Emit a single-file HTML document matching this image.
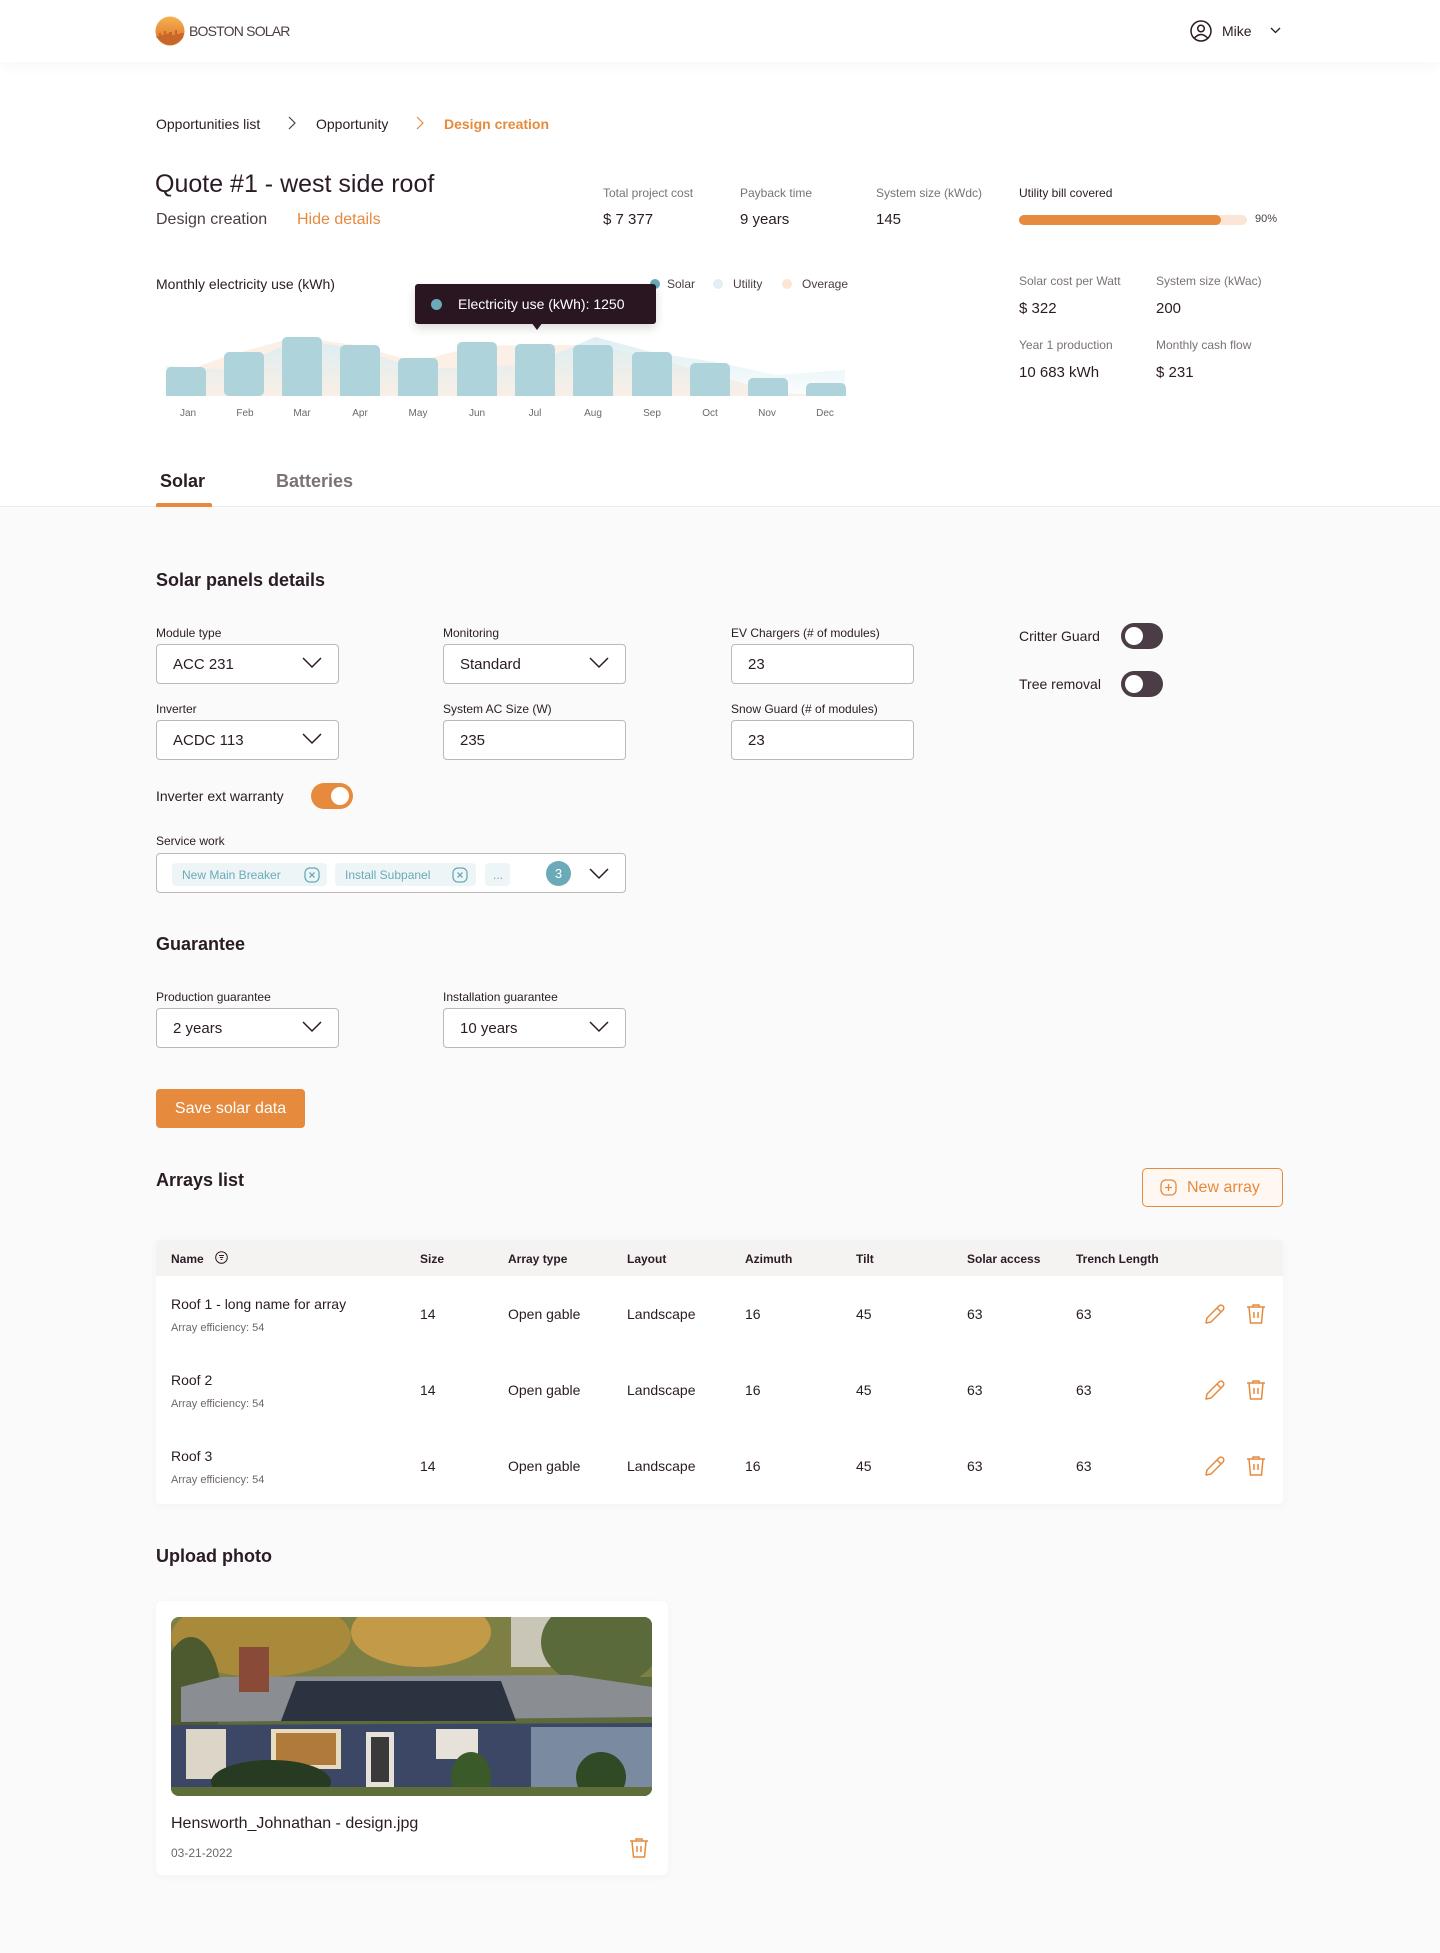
<!DOCTYPE html>
<html><head><meta charset="utf-8"><style>
*{box-sizing:border-box;margin:0;padding:0}
body{width:1440px;height:1953px;background:#fafafa;font-family:"Liberation Sans",sans-serif;color:#2a1b24;position:relative;overflow:hidden}
.a{position:absolute;white-space:nowrap}
.top{position:absolute;left:0;top:0;width:1440px;height:507px;background:#fff;border-bottom:1px solid #ececec}
.hdr{position:absolute;left:0;top:0;width:1440px;height:62px;background:#fff;box-shadow:0 4px 14px rgba(0,0,0,.04)}
.lbl{font-size:12px;color:#7a7275}
.val{font-size:15px;color:#2a1b24}
.flbl{font-size:12px;color:#2a1b24}
.inp{position:absolute;width:183px;height:40px;border:1px solid #bdb8ba;border-radius:4px;background:#fff;font-size:15px;padding:11px 16px;color:#2a1b24}
.inp svg{position:absolute;right:16px;top:12px}
.h2{font-size:18px;font-weight:bold;color:#2a1b24}
.tog{position:absolute;width:42px;height:26px;border-radius:13px;background:#4a3d45}
.tog::after{content:"";position:absolute;left:4px;top:4px;width:18px;height:18px;border-radius:50%;background:#fff}
.tog.on{background:#e68a3e}.tog.on::after{left:20px}
.th{font-size:12px;font-weight:bold;color:#2a1b24}
.td{font-size:14px;color:#2a1b24}
.sub{font-size:11px;color:#6f676b}
.chip{position:absolute;top:9px;height:23px;background:#eef5f7;border-radius:4px;font-size:12px;color:#6aaab9;padding:5px 10px}
</style></head><body>
<div class="top"></div>
<div class="hdr"></div>
<svg class="a" style="left:155px;top:16px" width="30" height="30" viewBox="0 0 30 30"><defs><linearGradient id="lg" x1="0" y1="0" x2="0" y2="1"><stop offset="0" stop-color="#f6b14f"/><stop offset="1" stop-color="#d8702a"/></linearGradient></defs><circle cx="15" cy="15" r="14.5" fill="url(#lg)"/><path d="M1 20 L4 20 4 17 6 17 6 19 9 19 9 15 11 15 11 18 14 18 14 16 17 16 17 19 20 19 20 14 22 14 22 18 25 18 25 17 29 17 L28 22 Q15 36 2 22Z" fill="#c9662a"/></svg>
<div class="a" style="left:189px;top:23px;font-size:14px;color:#4a3d45;letter-spacing:-.8px">BOSTON SOLAR</div>
<svg class="a" style="left:1190px;top:20px" width="22" height="22" viewBox="0 0 22 22" fill="none" stroke="#2a1b24" stroke-width="1.5"><circle cx="11" cy="11" r="10"/><circle cx="11" cy="8.5" r="3.3"/><path d="M4.5 18 Q11 11 17.5 18"/></svg>
<div class="a" style="left:1222px;top:23px;font-size:14px">Mike</div>
<svg class="a" style="left:1270px;top:27px" width="11" height="7" viewBox="0 0 11 7" fill="none" stroke="#2a1b24" stroke-width="1.3"><path d="M1 1l4.5 4.5L10 1"/></svg>

<div class="a" style="left:156px;top:116px;font-size:14px;color:#2a1b24">Opportunities list</div>
<svg class="a" style="left:288px;top:116px" width="8" height="14" viewBox="0 0 8 14" fill="none" stroke="#4a3d45" stroke-width="1.2"><path d="M1 1l6 6-6 6"/></svg>
<div class="a" style="left:316px;top:116px;font-size:14px">Opportunity</div>
<svg class="a" style="left:416px;top:116px" width="8" height="14" viewBox="0 0 8 14" fill="none" stroke="#e68a3e" stroke-width="1.2"><path d="M1 1l6 6-6 6"/></svg>
<div class="a" style="left:444px;top:116px;font-size:14px;color:#e68a3e;font-weight:bold">Design creation</div>

<div class="a" style="left:155px;top:170px;font-size:25px">Quote #1 - west side roof</div>
<div class="a" style="left:156px;top:211px;font-size:16px;color:#4a3d45">Design creation</div>
<div class="a" style="left:297px;top:211px;font-size:16px;color:#e68a3e">Hide details</div>

<div class="a lbl" style="left:603px;top:186px">Total project cost</div><div class="a val" style="left:603px;top:211px">$ 7 377</div>
<div class="a lbl" style="left:740px;top:186px">Payback time</div><div class="a val" style="left:740px;top:211px">9 years</div>
<div class="a lbl" style="left:876px;top:186px">System size (kWdc)</div><div class="a val" style="left:876px;top:211px">145</div>
<div class="a lbl" style="left:1019px;top:186px;color:#2a1b24">Utility bill covered</div>
<div class="a" style="left:1019px;top:215px;width:228px;height:10px;border-radius:5px;background:#fbe6d5"></div>
<div class="a" style="left:1019px;top:215px;width:202px;height:10px;border-radius:5px;background:#e68a3e"></div>
<div class="a" style="left:1255px;top:213px;font-size:11px;color:#4a3d45">90%</div>

<div class="a" style="left:156px;top:276px;font-size:14px">Monthly electricity use (kWh)</div>
<div class="a" style="left:650px;top:279px;width:10px;height:10px;border-radius:50%;background:#6aaab9"></div><div class="a" style="left:667px;top:277px;font-size:12px;color:#4a3d45">Solar</div>
<div class="a" style="left:713px;top:279px;width:10px;height:10px;border-radius:50%;background:#e3eff2"></div><div class="a" style="left:733px;top:277px;font-size:12px;color:#4a3d45">Utility</div>
<div class="a" style="left:782px;top:279px;width:10px;height:10px;border-radius:50%;background:#fbe6d5"></div><div class="a" style="left:802px;top:277px;font-size:12px;color:#4a3d45">Overage</div>

<svg class="a" style="left:160px;top:320px" width="690" height="110" viewBox="160 320 690 110">
<defs><linearGradient id="fg" x1="0" y1="0" x2="0" y2="1"><stop offset="0" stop-color="#dceef2"/><stop offset="1" stop-color="#dceef2" stop-opacity=".1"/></linearGradient></defs>
<path d="M166 378 L230 355 L296 337 L355 345 L416 362 L475 346 L535 345 L595 345 L655 358 L716 375 L776 393 L845 396 L845 396 L166 396Z" fill="#fbe8da" opacity=".7"/>
<path d="M166 366 L230 370 L296 340 L355 348 L416 368 L475 368 L535 363 L595 337 L655 353 L716 362 L776 375 L845 370 L845 396 L166 396Z" fill="url(#fg)"/>
<g fill="#aed3da">
<path d="M166 396V372a5 5 0 0 1 5-5h30a5 5 0 0 1 5 5v24z"/>
<rect x="224" y="352" width="40" height="44" rx="5"/>
<path d="M282 396V342a5 5 0 0 1 5-5h30a5 5 0 0 1 5 5v54z"/>
<path d="M340 396V350a5 5 0 0 1 5-5h30a5 5 0 0 1 5 5v46z"/>
<path d="M398 396V363a5 5 0 0 1 5-5h30a5 5 0 0 1 5 5v33z"/>
<path d="M457 396V347a5 5 0 0 1 5-5h30a5 5 0 0 1 5 5v49z"/>
<path d="M515 396V349a5 5 0 0 1 5-5h30a5 5 0 0 1 5 5v47z"/>
<path d="M573 396V350a5 5 0 0 1 5-5h30a5 5 0 0 1 5 5v46z"/>
<path d="M632 396V357a5 5 0 0 1 5-5h30a5 5 0 0 1 5 5v39z"/>
<path d="M690 396V368a5 5 0 0 1 5-5h30a5 5 0 0 1 5 5v28z"/>
<path d="M748 396V383a5 5 0 0 1 5-5h30a5 5 0 0 1 5 5v13z"/>
<path d="M806 396V388a5 5 0 0 1 5-5h30a5 5 0 0 1 5 5v8z"/>
</g>
<g font-size="10" fill="#6f676b" text-anchor="middle" font-family="Liberation Sans">
<text x="188" y="416">Jan</text><text x="245" y="416">Feb</text><text x="302" y="416">Mar</text><text x="360" y="416">Apr</text><text x="418" y="416">May</text><text x="477" y="416">Jun</text><text x="535" y="416">Jul</text><text x="593" y="416">Aug</text><text x="652" y="416">Sep</text><text x="710" y="416">Oct</text><text x="767" y="416">Nov</text><text x="825" y="416">Dec</text>
</g></svg>
<div class="a" style="left:415px;top:284px;width:241px;height:40px;background:#2a1620;border-radius:3px;box-shadow:0 4px 10px rgba(0,0,0,.15)"></div>
<div class="a" style="left:531px;top:322px;width:0;height:0;border-left:6px solid transparent;border-right:6px solid transparent;border-top:8px solid #2a1620"></div>
<div class="a" style="left:431px;top:299px;width:11px;height:11px;border-radius:50%;background:#6aaab9"></div>
<div class="a" style="left:458px;top:296px;font-size:14px;color:#fff">Electricity use (kWh): 1250</div>

<div class="a lbl" style="left:1019px;top:274px">Solar cost per Watt</div><div class="a val" style="left:1019px;top:300px">$ 322</div>
<div class="a lbl" style="left:1156px;top:274px">System size (kWac)</div><div class="a val" style="left:1156px;top:300px">200</div>
<div class="a lbl" style="left:1019px;top:338px">Year 1 production</div><div class="a val" style="left:1019px;top:364px">10 683 kWh</div>
<div class="a lbl" style="left:1156px;top:338px">Monthly cash flow</div><div class="a val" style="left:1156px;top:364px">$ 231</div>

<div class="a" style="left:160px;top:471px;font-size:18px;font-weight:bold">Solar</div>
<div class="a" style="left:276px;top:471px;font-size:18px;font-weight:bold;color:#7a7275">Batteries</div>
<div class="a" style="left:156px;top:503px;width:56px;height:4px;background:#e68a3e;border-radius:2px 2px 0 0"></div>

<div class="a h2" style="left:156px;top:570px">Solar panels details</div>
<div class="a flbl" style="left:156px;top:626px">Module type</div>
<div class="inp" style="left:156px;top:644px">ACC 231<svg width="20" height="12" viewBox="0 0 20 12" fill="none" stroke="#2a1b24" stroke-width="1.5"><path d="M1 1l9 9 9-9"/></svg></div>
<div class="a flbl" style="left:443px;top:626px">Monitoring</div>
<div class="inp" style="left:443px;top:644px">Standard<svg width="20" height="12" viewBox="0 0 20 12" fill="none" stroke="#2a1b24" stroke-width="1.5"><path d="M1 1l9 9 9-9"/></svg></div>
<div class="a flbl" style="left:731px;top:626px">EV Chargers (# of modules)</div>
<div class="inp" style="left:731px;top:644px">23</div>
<div class="a" style="left:1019px;top:628px;font-size:14px">Critter Guard</div><div class="tog" style="left:1121px;top:623px"></div>
<div class="a" style="left:1019px;top:676px;font-size:14px">Tree removal</div><div class="tog" style="left:1121px;top:671px"></div>

<div class="a flbl" style="left:156px;top:702px">Inverter</div>
<div class="inp" style="left:156px;top:720px">ACDC 113<svg width="20" height="12" viewBox="0 0 20 12" fill="none" stroke="#2a1b24" stroke-width="1.5"><path d="M1 1l9 9 9-9"/></svg></div>
<div class="a flbl" style="left:443px;top:702px">System AC Size (W)</div>
<div class="inp" style="left:443px;top:720px">235</div>
<div class="a flbl" style="left:731px;top:702px">Snow Guard (# of modules)</div>
<div class="inp" style="left:731px;top:720px">23</div>

<div class="a" style="left:156px;top:788px;font-size:14px">Inverter ext warranty</div><div class="tog on" style="left:311px;top:783px"></div>

<div class="a flbl" style="left:156px;top:834px">Service work</div>
<div class="inp" style="left:156px;top:853px;width:470px;padding:0">
<div class="chip" style="left:15px;width:155px">New Main Breaker<svg style="position:absolute;left:132px;top:4px" width="16" height="16" viewBox="0 0 16 16" fill="none" stroke="#6aaab9" stroke-width="1.3"><rect x="1" y="1" width="14" height="14" rx="5"/><path d="M5.5 5.5l5 5M10.5 5.5l-5 5"/></svg></div>
<div class="chip" style="left:178px;width:141px">Install Subpanel<svg style="position:absolute;left:117px;top:4px" width="16" height="16" viewBox="0 0 16 16" fill="none" stroke="#6aaab9" stroke-width="1.3"><rect x="1" y="1" width="14" height="14" rx="5"/><path d="M5.5 5.5l5 5M10.5 5.5l-5 5"/></svg></div>
<div class="chip" style="left:328px;width:25px;padding:5px 8px">...</div>
<div style="position:absolute;left:389px;top:7px;width:25px;height:25px;border-radius:50%;background:#6aaab9;color:#fff;font-size:13px;text-align:center;line-height:25px">3</div>
<svg style="right:16px;top:14px" width="20" height="12" viewBox="0 0 20 12" fill="none" stroke="#2a1b24" stroke-width="1.5"><path d="M1 1l9 9 9-9"/></svg>
</div>

<div class="a h2" style="left:156px;top:934px">Guarantee</div>
<div class="a flbl" style="left:156px;top:990px">Production guarantee</div>
<div class="inp" style="left:156px;top:1008px">2 years<svg width="20" height="12" viewBox="0 0 20 12" fill="none" stroke="#2a1b24" stroke-width="1.5"><path d="M1 1l9 9 9-9"/></svg></div>
<div class="a flbl" style="left:443px;top:990px">Installation guarantee</div>
<div class="inp" style="left:443px;top:1008px">10 years<svg width="20" height="12" viewBox="0 0 20 12" fill="none" stroke="#2a1b24" stroke-width="1.5"><path d="M1 1l9 9 9-9"/></svg></div>

<div class="a" style="left:156px;top:1089px;width:149px;height:39px;background:#e68a3e;border-radius:4px;color:#fff;font-size:16px;text-align:center;line-height:39px">Save solar data</div>

<div class="a h2" style="left:156px;top:1170px">Arrays list</div>
<div class="a" style="left:1142px;top:1168px;width:141px;height:39px;border:1px solid #e68a3e;border-radius:5px;background:#fff8f2;color:#e68a3e;font-size:16px;padding:10px 0 0 44px">New array</div>
<svg class="a" style="left:1160px;top:1179px" width="17" height="17" viewBox="0 0 17 17" fill="none" stroke="#e68a3e" stroke-width="1.3"><rect x="1" y="1" width="15" height="15" rx="5"/><path d="M8.5 5v7M5 8.5h7"/></svg>

<div class="a" style="left:156px;top:1240px;width:1127px;height:264px;background:#fff;border-radius:4px;box-shadow:0 2px 10px rgba(0,0,0,.03)"></div>
<div class="a" style="left:156px;top:1240px;width:1127px;height:36px;background:#f5f3f2;border-radius:4px 4px 0 0"></div>
<div class="a th" style="left:171px;top:1252px">Name</div>
<svg class="a" style="left:215px;top:1251px" width="13" height="13" viewBox="0 0 13 13" fill="none" stroke="#2a1b24" stroke-width="1"><circle cx="6.5" cy="6.5" r="5.8"/><path d="M4 4.5h5M4.8 6.5h3.4M5.7 8.5h1.6"/></svg>
<div class="a th" style="left:420px;top:1252px">Size</div>
<div class="a th" style="left:508px;top:1252px">Array type</div>
<div class="a th" style="left:627px;top:1252px">Layout</div>
<div class="a th" style="left:745px;top:1252px">Azimuth</div>
<div class="a th" style="left:856px;top:1252px">Tilt</div>
<div class="a th" style="left:967px;top:1252px">Solar access</div>
<div class="a th" style="left:1076px;top:1252px">Trench Length</div>

<div class="a td" style="left:171px;top:1296px">Roof 1 - long name for array</div><div class="a sub" style="left:171px;top:1322px">Array efficiency: 54</div>
<div class="a td" style="left:420px;top:1306px">14</div><div class="a td" style="left:508px;top:1306px">Open gable</div><div class="a td" style="left:627px;top:1306px">Landscape</div><div class="a td" style="left:745px;top:1306px">16</div><div class="a td" style="left:856px;top:1306px">45</div><div class="a td" style="left:967px;top:1306px">63</div><div class="a td" style="left:1076px;top:1306px">63</div>
<div class="a td" style="left:171px;top:1372px">Roof 2</div><div class="a sub" style="left:171px;top:1398px">Array efficiency: 54</div>
<div class="a td" style="left:420px;top:1382px">14</div><div class="a td" style="left:508px;top:1382px">Open gable</div><div class="a td" style="left:627px;top:1382px">Landscape</div><div class="a td" style="left:745px;top:1382px">16</div><div class="a td" style="left:856px;top:1382px">45</div><div class="a td" style="left:967px;top:1382px">63</div><div class="a td" style="left:1076px;top:1382px">63</div>
<div class="a td" style="left:171px;top:1448px">Roof 3</div><div class="a sub" style="left:171px;top:1474px">Array efficiency: 54</div>
<div class="a td" style="left:420px;top:1458px">14</div><div class="a td" style="left:508px;top:1458px">Open gable</div><div class="a td" style="left:627px;top:1458px">Landscape</div><div class="a td" style="left:745px;top:1458px">16</div><div class="a td" style="left:856px;top:1458px">45</div><div class="a td" style="left:967px;top:1458px">63</div><div class="a td" style="left:1076px;top:1458px">63</div>

<svg class="a" style="left:1204px;top:1303px" width="22" height="22" viewBox="0 0 22 22" fill="none" stroke="#e68a3e" stroke-width="1.5" stroke-linejoin="round"><path d="M2 20l1-5L15 3a2.5 2.5 0 0 1 4 4L7 19z M13 5l4 4"/></svg>
<svg class="a" style="left:1246px;top:1303px" width="20" height="22" viewBox="0 0 20 22" fill="none" stroke="#e68a3e" stroke-width="1.5"><path d="M1 4h18M7 4V2h6v2M3 4l1.5 16h11L17 4M8 9v6M12 9v6"/></svg>
<svg class="a" style="left:1204px;top:1379px" width="22" height="22" viewBox="0 0 22 22" fill="none" stroke="#e68a3e" stroke-width="1.5" stroke-linejoin="round"><path d="M2 20l1-5L15 3a2.5 2.5 0 0 1 4 4L7 19z M13 5l4 4"/></svg>
<svg class="a" style="left:1246px;top:1379px" width="20" height="22" viewBox="0 0 20 22" fill="none" stroke="#e68a3e" stroke-width="1.5"><path d="M1 4h18M7 4V2h6v2M3 4l1.5 16h11L17 4M8 9v6M12 9v6"/></svg>
<svg class="a" style="left:1204px;top:1455px" width="22" height="22" viewBox="0 0 22 22" fill="none" stroke="#e68a3e" stroke-width="1.5" stroke-linejoin="round"><path d="M2 20l1-5L15 3a2.5 2.5 0 0 1 4 4L7 19z M13 5l4 4"/></svg>
<svg class="a" style="left:1246px;top:1455px" width="20" height="22" viewBox="0 0 20 22" fill="none" stroke="#e68a3e" stroke-width="1.5"><path d="M1 4h18M7 4V2h6v2M3 4l1.5 16h11L17 4M8 9v6M12 9v6"/></svg>

<div class="a h2" style="left:156px;top:1546px">Upload photo</div>
<div class="a" style="left:156px;top:1601px;width:512px;height:274px;background:#fff;border-radius:6px;box-shadow:0 2px 10px rgba(0,0,0,.03)"></div>
<svg class="a" style="left:171px;top:1617px;border-radius:8px" width="481" height="179" viewBox="0 0 481 179">
<rect width="481" height="179" fill="#5d6a3c"/>
<rect width="481" height="60" fill="#7d7f45"/>
<ellipse cx="90" cy="20" rx="90" ry="40" fill="#a88a3a"/>
<ellipse cx="250" cy="15" rx="70" ry="35" fill="#c39a48"/>
<rect x="340" y="0" width="60" height="50" fill="#c9c6b8"/>
<ellipse cx="430" cy="25" rx="60" ry="45" fill="#5a6a3a"/>
<ellipse cx="20" cy="80" rx="30" ry="60" fill="#4d5a30"/>
<path d="M10 70 L50 60 L400 58 L481 70 L481 100 L10 105Z" fill="#8a8d92"/>
<path d="M125 64 L330 64 L345 104 L110 104Z" fill="#2b3240"/>
<rect x="68" y="30" width="30" height="45" fill="#8a4a38"/>
<path d="M0 108 L481 106 L481 179 L0 179Z" fill="#3b4764"/>
<rect x="15" y="112" width="40" height="50" fill="#dcd6c8"/>
<rect x="100" y="112" width="70" height="40" fill="#e8dcc0"/>
<rect x="105" y="116" width="60" height="32" fill="#b07a3a"/>
<rect x="195" y="115" width="28" height="55" fill="#e6e2da"/>
<rect x="200" y="120" width="18" height="45" fill="#3a3a3a"/>
<rect x="265" y="112" width="42" height="30" fill="#e6e2da"/>
<rect x="360" y="110" width="121" height="60" fill="#7a8aa0"/>
<ellipse cx="100" cy="165" rx="60" ry="22" fill="#273a22"/>
<ellipse cx="300" cy="160" rx="20" ry="25" fill="#3a5a2a"/>
<ellipse cx="430" cy="160" rx="25" ry="25" fill="#2f4a25"/>
<rect y="170" width="481" height="9" fill="#5e6e38"/>
</svg>
<div class="a" style="left:171px;top:1815px;font-size:16px;color:#2a1b24">Hensworth_Johnathan - design.jpg</div>
<div class="a" style="left:171px;top:1846px;font-size:12px;color:#6f676b">03-21-2022</div>
<svg class="a" style="left:629px;top:1837px" width="20" height="22" viewBox="0 0 20 22" fill="none" stroke="#e68a3e" stroke-width="1.5"><path d="M1 4h18M7 4V2h6v2M3 4l1.5 16h11L17 4M8 9v6M12 9v6"/></svg>
</body></html>
